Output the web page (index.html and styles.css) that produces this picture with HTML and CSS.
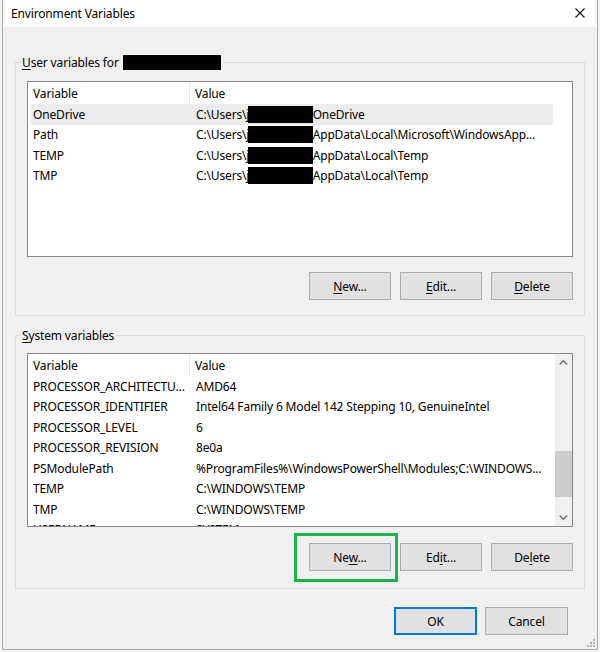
FILE: index.html
```html
<!DOCTYPE html>
<html>
<head>
<meta charset="utf-8">
<title>Environment Variables</title>
<link rel="stylesheet" href="styles.css">
</head>
<body>
<div class="window">
  <div class="titlebar">
    <span class="title">Environment Variables</span>
    <svg class="close" width="10" height="10" viewBox="0 0 10 10"><path d="M0.5 0.5L9.5 9.5M9.5 0.5L0.5 9.5" stroke="#111" stroke-width="1.1" fill="none"/></svg>
  </div>
  <div class="client">
    <div class="group group-user">
      <div class="group-label"><u>U</u>ser variables for <span class="redact redact-title"></span></div>
      <div class="list list-user">
        <div class="list-body">
          <div class="list-head"><div class="hcol1">Variable</div><div class="hcol2">Value</div></div>
          <div class="row selected"><div class="c1">OneDrive</div><div class="c2">C:\Users\j<span class="redact redact-row"></span>\OneDrive</div></div>
          <div class="row"><div class="c1">Path</div><div class="c2">C:\Users\j<span class="redact redact-row"></span>\AppData\Local\Microsoft\WindowsApp...</div></div>
          <div class="row"><div class="c1">TEMP</div><div class="c2">C:\Users\j<span class="redact redact-row"></span>\AppData\Local\Temp</div></div>
          <div class="row"><div class="c1">TMP</div><div class="c2">C:\Users\j<span class="redact redact-row"></span>\AppData\Local\Temp</div></div>
        </div>
      </div>
      <div class="btn-row">
        <button class="btn"><u>N</u>ew...</button>
        <button class="btn"><u>E</u>dit...</button>
        <button class="btn"><u>D</u>elete</button>
      </div>
    </div>

    <div class="group group-sys">
      <div class="group-label"><u>S</u>ystem variables</div>
      <div class="list list-sys">
        <div class="list-body">
          <div class="list-head"><div class="hcol1">Variable</div><div class="hcol2">Value</div></div>
          <div class="row"><div class="c1">PROCESSOR_ARCHITECTU...</div><div class="c2">AMD64</div></div>
          <div class="row"><div class="c1">PROCESSOR_IDENTIFIER</div><div class="c2">Intel64 Family 6 Model 142 Stepping 10, GenuineIntel</div></div>
          <div class="row"><div class="c1">PROCESSOR_LEVEL</div><div class="c2">6</div></div>
          <div class="row"><div class="c1">PROCESSOR_REVISION</div><div class="c2">8e0a</div></div>
          <div class="row"><div class="c1">PSModulePath</div><div class="c2">%ProgramFiles%\WindowsPowerShell\Modules;C:\WINDOWS...</div></div>
          <div class="row"><div class="c1">TEMP</div><div class="c2">C:\WINDOWS\TEMP</div></div>
          <div class="row"><div class="c1">TMP</div><div class="c2">C:\WINDOWS\TEMP</div></div>
          <div class="row"><div class="c1">USERNAME</div><div class="c2">SYSTEM</div></div>
        </div>
        <div class="scrollbar">
          <div class="sb-btn"><svg width="9" height="5" viewBox="0 0 9 5"><path d="M0.7 4.5L4.5 0.8L8.3 4.5" stroke="#606060" stroke-width="1.2" fill="none"/></svg></div>
          <div class="sb-track"><div class="sb-thumb"></div></div>
          <div class="sb-btn"><svg width="9" height="5" viewBox="0 0 9 5"><path d="M0.7 0.5L4.5 4.2L8.3 0.5" stroke="#606060" stroke-width="1.2" fill="none"/></svg></div>
        </div>
      </div>
      <div class="btn-row btn-row-sys">
        <div class="hl">
          <button class="btn">Ne<u>w</u>...</button>
          <div class="hl-box"></div>
        </div>
        <button class="btn">Ed<u>i</u>t...</button>
        <button class="btn">De<u>l</u>ete</button>
      </div>
    </div>

    <div class="footer">
      <button class="btn btn-wide btn-default">OK</button>
      <button class="btn btn-wide">Cancel</button>
    </div>
  </div>
  <svg class="grip" width="11" height="11" viewBox="0 0 11 11">
    <rect x="8" y="2" width="2" height="2" fill="#b4b4b4"/>
    <rect x="5" y="5" width="2" height="2" fill="#b4b4b4"/>
    <rect x="8" y="5" width="2" height="2" fill="#b4b4b4"/>
    <rect x="2" y="8" width="2" height="2" fill="#b4b4b4"/>
    <rect x="5" y="8" width="2" height="2" fill="#b4b4b4"/>
    <rect x="8" y="8" width="2" height="2" fill="#b4b4b4"/>
  </svg>
</div>
</body>
</html>
```

FILE: styles.css
```css
html, body {
  margin: 0;
  padding: 0;
}

body {
  width: 600px;
  height: 652px;
  overflow: hidden;
  background: #f4f4f4;
  font-family: "Noto Sans", "Segoe UI", "Liberation Sans", sans-serif;
  font-size: 12px;
  letter-spacing: -0.15px;
  color: #000;
}

.window {
  position: relative;
  margin-left: 2px;
  width: 596px;
  height: 650px;
  box-sizing: border-box;
  border: 1px solid #a9a9a9;
  border-top: none;
  background: #f0f0f0;
  display: flex;
  flex-direction: column;
}

.titlebar {
  flex: none;
  height: 27px;
  background: #fff;
  display: flex;
  align-items: center;
  justify-content: space-between;
  padding: 0 12px 0 8px;
}

.title {
  line-height: 16px;
}

.close {
  display: block;
  margin-top: -1px;
}

.client {
  flex: 1;
  padding: 35px 12px 0;
}

.group {
  position: relative;
  border: 1px solid #dcdcdc;
  padding: 18px 11px 15px;
}

.group-sys {
  margin-top: 19px;
  padding: 17px 11px 17px;
}

.group-label {
  position: absolute;
  top: -8px;
  left: 5px;
  padding: 0 2px 0 1px;
  line-height: 16px;
  background: #f0f0f0;
  white-space: nowrap;
}

u {
  text-underline-offset: 2px;
}

.redact {
  display: inline-block;
  background: #000;
}

.redact-title {
  width: 98px;
  height: 15px;
  vertical-align: -3px;
  margin-left: 1px;
}

.redact-row {
  position: relative;
  z-index: 1;
  width: 65px;
  height: 17px;
  vertical-align: -4px;
  margin-left: -1px;
  margin-right: -5px;
}

.list {
  box-sizing: border-box;
  border: 1px solid #828790;
  background: #fff;
  display: flex;
  overflow: hidden;
}

.list-user {
  height: 176px;
}

.list-sys {
  height: 174px;
}

.list-body {
  flex: 1;
  min-width: 0;
  overflow: hidden;
}

.list-head {
  display: flex;
  height: 22px;
  width: 525px;
}

.hcol1 {
  width: 162px;
  box-sizing: border-box;
  padding-left: 5px;
  border-right: 1px solid #e5e5e5;
  display: flex;
  align-items: center;
}

.hcol2 {
  padding-left: 5px;
  display: flex;
  align-items: center;
}

.row {
  display: flex;
  align-items: center;
  height: 20.5px;
  width: 522px;
  margin-left: 3px;
  padding-left: 2px;
  box-sizing: border-box;
  white-space: nowrap;
}

.row.selected {
  background: #ececec;
}

.c1 {
  flex: none;
  width: 163px;
  overflow: hidden;
}

.c2 {
  flex: 1;
  min-width: 0;
  overflow: hidden;
  text-overflow: ellipsis;
}

.scrollbar {
  flex: none;
  width: 17px;
  background: #f0f0f0;
  display: flex;
  flex-direction: column;
}

.sb-btn {
  flex: none;
  height: 17px;
  display: flex;
  align-items: center;
  justify-content: center;
}

.sb-btn svg {
  display: block;
}

.sb-track {
  flex: 1;
  padding-top: 80px;
}

.sb-thumb {
  height: 46px;
  background: #cdcdcd;
}

.btn-row {
  display: flex;
  justify-content: flex-end;
  gap: 9px;
  margin-top: 15px;
}

.btn-row-sys {
  margin-top: 16px;
}

.btn {
  width: 82px;
  height: 28px;
  box-sizing: border-box;
  border: 1px solid #adadad;
  background: #e1e1e1;
  font: inherit;
  letter-spacing: inherit;
  color: #000;
  padding: 0;
  margin: 0;
}

.hl {
  position: relative;
  display: flex;
}

.hl-box {
  position: absolute;
  left: -15px;
  top: -10px;
  width: 104px;
  height: 49px;
  box-sizing: border-box;
  border: 3px solid #22b14c;
  pointer-events: none;
}

.footer {
  display: flex;
  justify-content: flex-end;
  gap: 8px;
  margin-top: 18px;
  margin-right: 17px;
}

.btn-wide {
  width: 83px;
}

.btn-default {
  border: 2px solid #0078d7;
}

.grip {
  position: absolute;
  right: 1px;
  bottom: 1px;
  display: block;
}
```
